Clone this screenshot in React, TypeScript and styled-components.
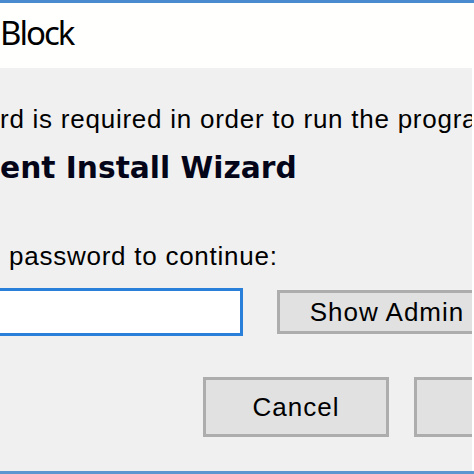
import React from "react";
import styled, { createGlobalStyle } from "styled-components";

const Global = createGlobalStyle`
  html, body { margin: 0; padding: 0; background: #ffffff; overflow: hidden; }
  #root { width: 474px; height: 474px; }
`;

const Window = styled.div`
  width: 474px;
  height: 474px;
  box-sizing: border-box;
  display: flex;
  flex-direction: column;
  background: #ffffff;
  border-top: 3px solid #4a8bd0;
  border-bottom: 3px solid #5c96d0;
  overflow: hidden;
`;

const TitleBar = styled.div`
  height: 65px;
  flex: none;
  box-sizing: border-box;
  padding-top: 13px;
  background: #fffffe;
`;

const Title = styled.div`
  font-family: "Noto Sans", "Open Sans", sans-serif;
  font-size: 33px;
  line-height: 33px;
  letter-spacing: -2px;
  color: #000;
  white-space: nowrap;
`;

const Body = styled.div`
  flex: 1;
  margin-right: 2px;
  background: #f0f0f0;
  padding-top: 38px;
  display: flex;
  flex-direction: column;
  overflow: hidden;
`;

const Text = styled.div<{ $top?: number; $indent?: number }>`
  font-family: "Liberation Sans", Arial, sans-serif;
  font-size: 26px;
  line-height: 26px;
  letter-spacing: 0.75px;
  color: #000;
  white-space: nowrap;
  margin-top: ${(p) => p.$top ?? 0}px;
  margin-left: ${(p) => p.$indent ?? 0}px;
`;

const Heading = styled.div`
  font-family: "DejaVu Sans", Verdana, sans-serif;
  font-weight: bold;
  font-size: 29.7px;
  line-height: 30px;
  color: #05051a;
  white-space: nowrap;
  margin-top: 21px;
`;

const InputRow = styled.div`
  display: flex;
  align-items: center;
  gap: 34px;
  margin-top: 19px;
  margin-left: -20px;
`;

const PasswordInput = styled.div`
  width: 263px;
  height: 48px;
  box-sizing: border-box;
  flex: none;
  background: #ffffff;
  border: 3px solid #2a7fd8;
`;

const Button = styled.div<{ $h: number; $w: number }>`
  flex: none;
  width: ${(p) => p.$w}px;
  height: ${(p) => p.$h}px;
  box-sizing: border-box;
  background: #e1e1e1;
  border: 3px solid #adadad;
  display: flex;
  align-items: center;
  justify-content: center;
  font-family: "Liberation Sans", Arial, sans-serif;
  font-size: 26px;
  letter-spacing: 1px;
  color: #000;
  white-space: nowrap;
`;

const ActionRow = styled.div`
  display: flex;
  gap: 25px;
  margin-top: 41px;
  margin-left: 203px;
`;

export default function App() {
  return (
    <>
      <Global />
      <Window>
        <TitleBar>
          <Title>Block</Title>
        </TitleBar>
        <Body>
          <Text>rd is required in order to run the program</Text>
          <Heading>ent Install Wizard</Heading>
          <Text $top={60} $indent={9}>password to continue:</Text>
          <InputRow>
            <PasswordInput />
            <Button $w={220} $h={44}>Show Admin</Button>
          </InputRow>
          <ActionRow>
            <Button $w={186} $h={60}>Cancel</Button>
            <Button $w={186} $h={60} />
          </ActionRow>
        </Body>
      </Window>
    </>
  );
}
